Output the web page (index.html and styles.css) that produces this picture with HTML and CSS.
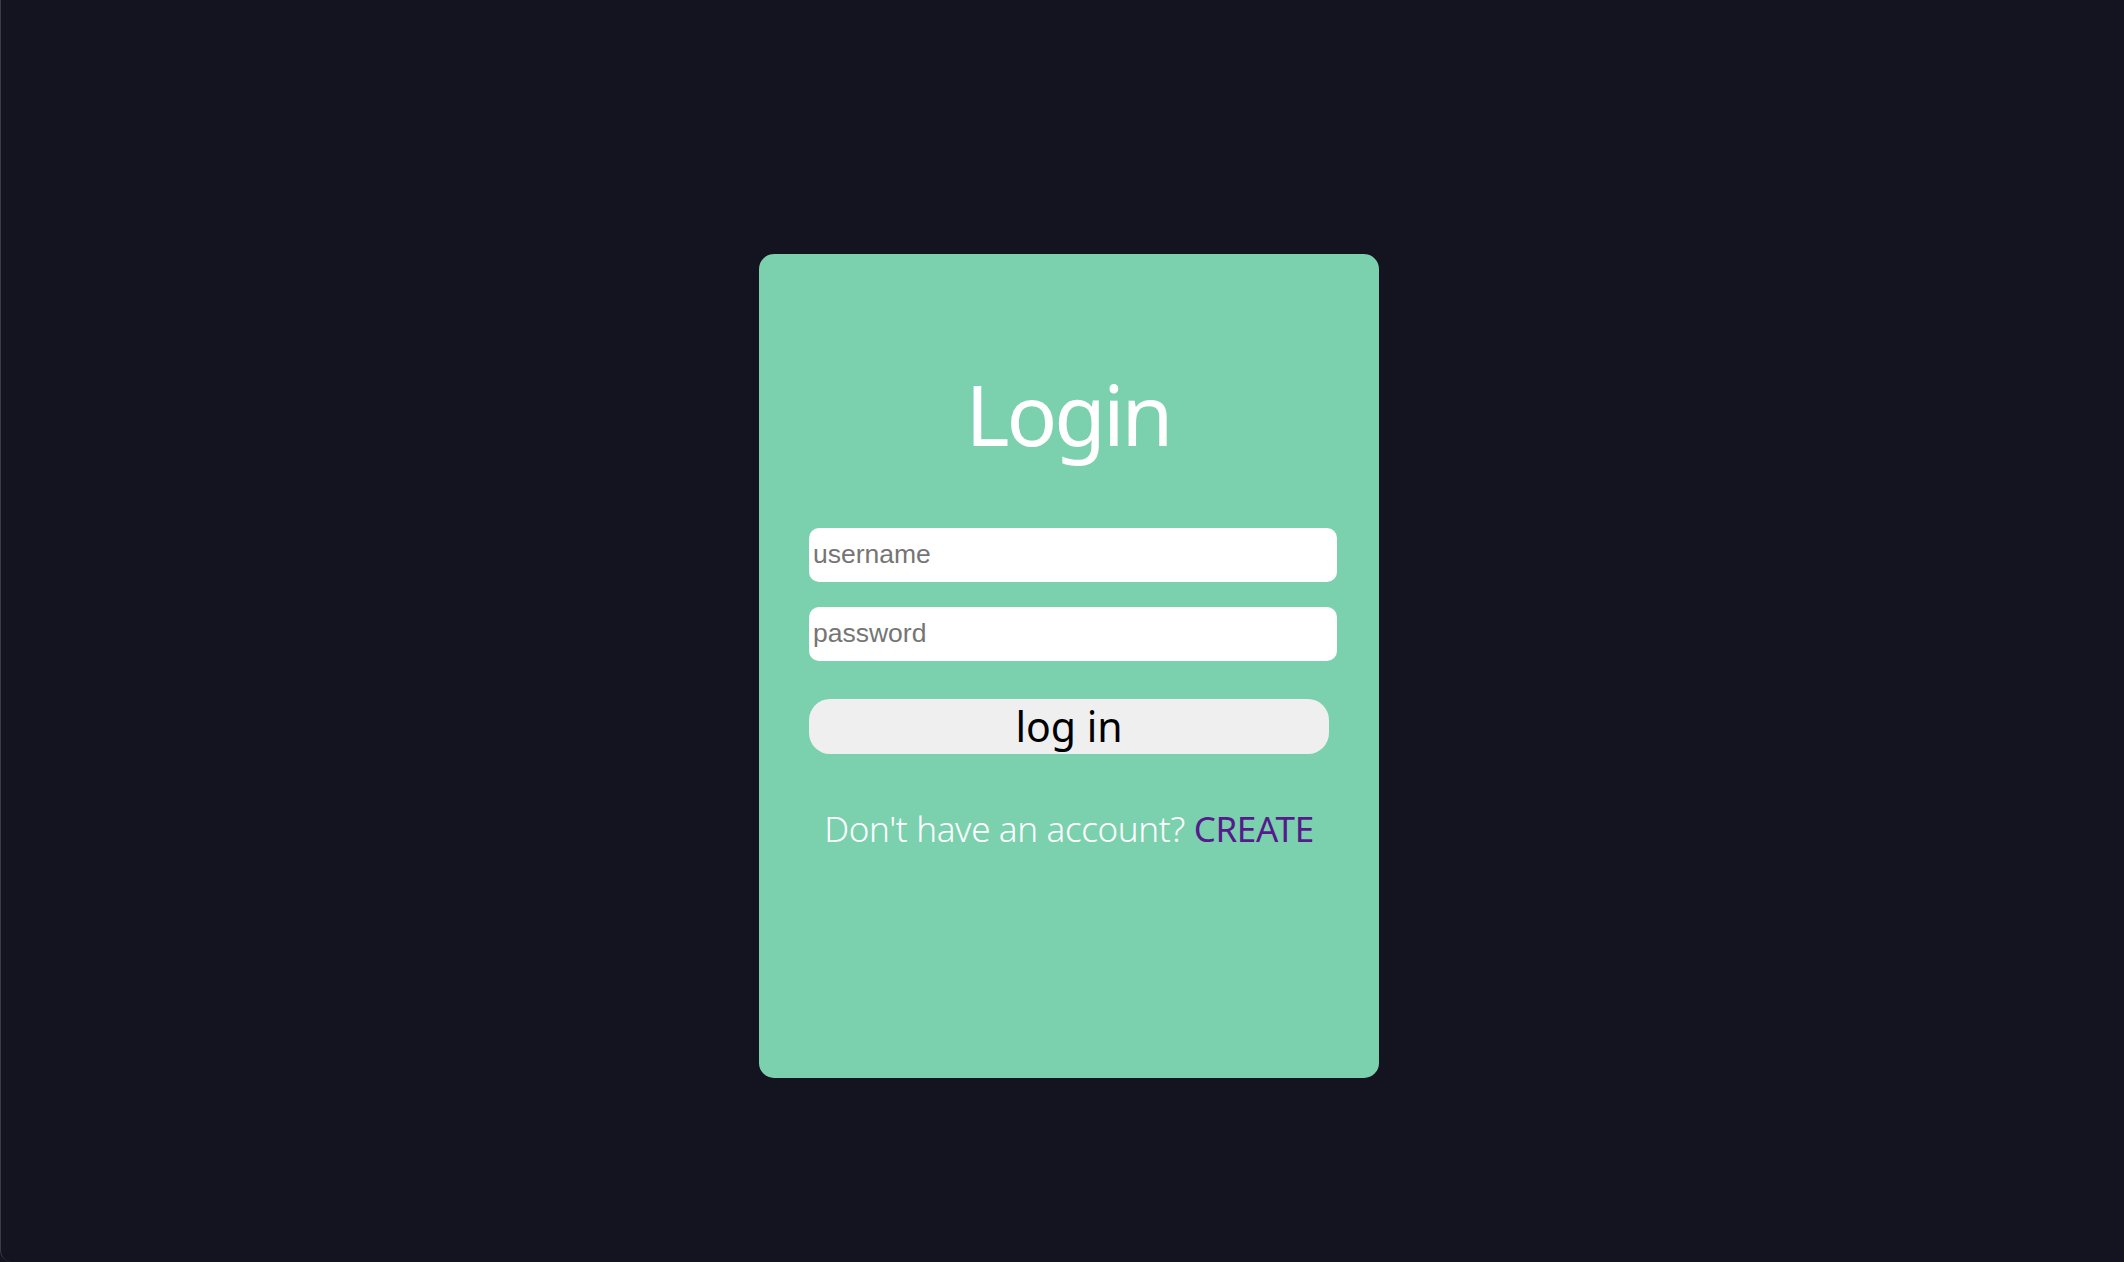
FILE: index.html
```html
<!DOCTYPE html>
<html lang="en">
<head>
<meta charset="utf-8">
<title>Login</title>
<link rel="stylesheet" href="styles.css">
</head>
<body>
<main class="page">
  <form class="card">
    <h1 class="title">Login</h1>
    <input class="field" type="text" placeholder="username">
    <input class="field field-second" type="password" placeholder="password">
    <button class="btn" type="button">log in</button>
    <p class="footer">Don't have an account? <a class="create" href="#">CREATE</a></p>
  </form>
</main>
</body>
</html>
```

FILE: styles.css
```css
html {
  height: 100%;
  background: #141320;
}
body {
  margin: 0;
  height: 100%;
  box-sizing: border-box;
  background: #141320;
  border-left: 1px solid #3b3a45;
  border-bottom-left-radius: 12px;
  font-family: "Noto Sans", "Open Sans", sans-serif;
}
.page {
  display: flex;
  justify-content: center;
  padding: 254px 0 0 13px;
}
.card {
  box-sizing: border-box;
  width: 620px;
  height: 824px;
  background: #7bd1ae;
  border-radius: 15px;
  padding: 118px 50px 0 50px;
  display: flex;
  flex-direction: column;
  align-items: flex-start;
}
.title {
  align-self: stretch;
  margin: 0 0 72px 0;
  padding-right: 2px;
  font-size: 84px;
  line-height: 1;
  font-weight: 400;
  letter-spacing: -3px;
  color: #ffffff;
  text-align: center;
}
.field {
  box-sizing: border-box;
  width: 528px;
  height: 53.5px;
  margin: 0;
  padding: 0 4px;
  border: none;
  border-radius: 10px;
  background: #ffffff;
  font-family: "Liberation Sans", Arial, sans-serif;
  font-size: 26.5px;
  color: #000;
  outline: none;
}
.field::placeholder {
  color: #757575;
}
.field-second {
  margin-top: 25.5px;
}
.btn {
  box-sizing: border-box;
  width: 520px;
  height: 55.5px;
  margin: 38px 0 0 0;
  padding: 0;
  border: none;
  border-radius: 21px;
  background: #efefef;
  color: #000;
  font-family: "Noto Sans", "Open Sans", sans-serif;
  font-size: 41px;
  line-height: 1;
}
.footer {
  align-self: stretch;
  margin: 57px 0 0 0;
  font-size: 35px;
  line-height: 1;
  font-weight: 300;
  letter-spacing: -0.35px;
  color: #ffffff;
  text-align: center;
}
.create {
  color: #551a8b;
  text-decoration: none;
  font-weight: 400;
}
```
